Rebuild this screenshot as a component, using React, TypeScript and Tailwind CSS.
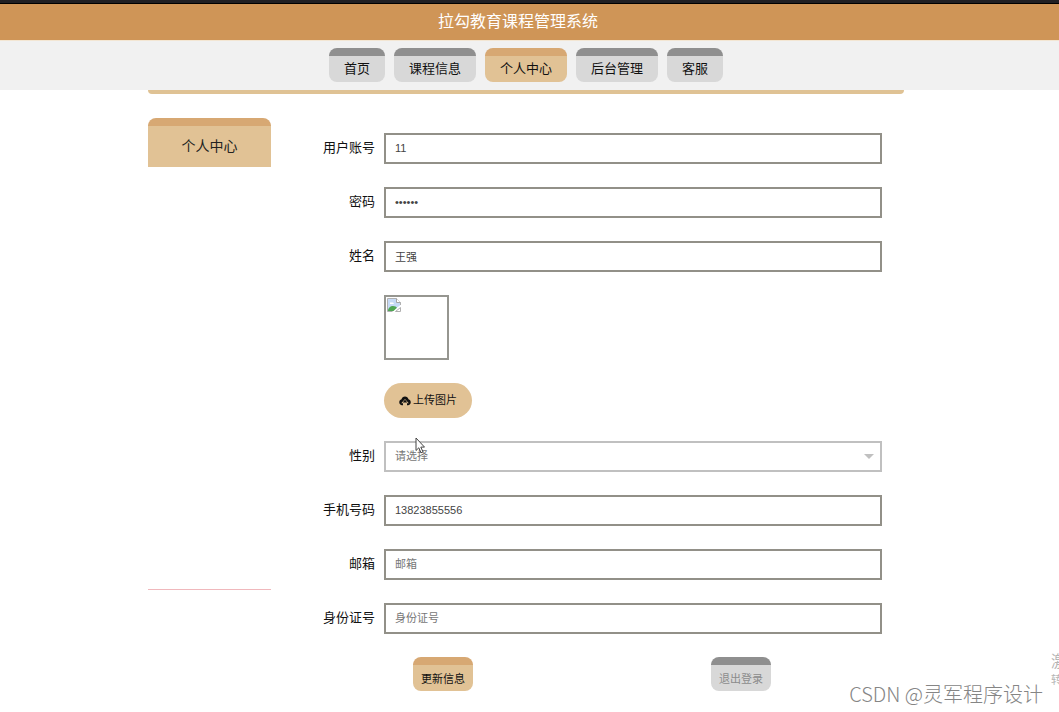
import React, { useState } from 'react';

const navItems = ['首页', '课程信息', '个人中心', '后台管理', '客服'];

const inputClass = "h-[31px] w-full border-2 border-[#929088] bg-white px-[9px] pb-0.5 text-[11px] text-[#444] placeholder:text-[#777] focus:outline-none";
const labelClass = "w-[104px] shrink-0 pb-0.5 text-right text-[13px] leading-5 text-[#111]";
const tabClass = "h-[34px] rounded-lg border-t-8 leading-6";
const activeTab = "border-[#d7a873] bg-[#e1c295]";
const greyTab = "border-[#8f8f8f] bg-[#d8d8d8]";

interface FieldProps {
  id: string;
  label: string;
  value: string;
  onChange: (value: string) => void;
  type?: string;
  placeholder?: string;
}

const Field: React.FC<FieldProps> = ({ id, label, value, onChange, type = 'text', placeholder }) => (
  <div className="flex items-center gap-[9px]">
    <label htmlFor={id} className={labelClass}>{label}</label>
    <input id={id} type={type} className={inputClass} placeholder={placeholder} value={value} onChange={e => onChange(e.target.value)} />
  </div>
);

const BrokenImage = () => (
  <svg width="14" height="14" viewBox="0 0 14 14" role="img" aria-label="头像">
    <path d="M.5.5h9l4 4V7L5 13.500H.5z" fill="#c6daf6" />
    <path d="M3 5.500c0-1 1-1.500 1.800-.8 1-.5 2 .1 2 1.200H3z" fill="#fff" />
    <path d="M1 13c0-3 2.500-5.200 5-5 2 .1 3.500 1 4 1.700L6.500 13z" fill="#4fa653" />
    <path d="M.5 13.500V.5h9l4 4V7M.5 13.500h5" fill="none" stroke="#b0b0b0" />
    <path d="M9.500.5v4h4" fill="#fff" stroke="#a5a5a5" />
    <path d="M13.500 9.500v4h-5z" fill="#fff" stroke="#b0b0b0" />
  </svg>
);

const CloudUpload = () => (
  <svg width="12" height="10" viewBox="0 0 24 20" aria-hidden="true">
    <path d="M12 1C8.500 1 5.700 3.300 5 6.700 2.300 7.400.5 9.700.5 12.500c0 3.300 2.500 6 5.500 6h2v-4H4.500L12 6l7.500 8.500H16v4h2c3 0 5.500-2.700 5.500-6 0-2.800-1.800-5.100-4.500-5.800C18.300 3.300 15.500 1 12 1z" fill="#111" />
    <path d="M12 8.500l-5 5.500h3v4.500h4V14h3z" fill="#e1c295" />
    <path d="M12 7l-4.500 6H16.500z" fill="#111" />
  </svg>
);

export default function App() {
  const [active, setActive] = useState('个人中心');
  const [form, setForm] = useState({ account: '11', password: '123456', name: '王强', gender: '', phone: '13823855556', email: '', idCard: '' });

  const update = (key: keyof typeof form) => (value: string) => setForm({ ...form, [key]: value });

  return (
    <div className="relative min-h-screen overflow-hidden bg-white font-['Liberation_Sans','Noto_Sans_CJK_SC',sans-serif] text-[#111]">
      <div className="h-1 border-b border-black bg-[#202024]" />
      <header className="flex h-9 items-center justify-center bg-[#cf9557] pr-[23px]">
        <h1 className="text-base leading-5 text-white">拉勾教育课程管理系统</h1>
      </header>

      <nav className="flex h-[50px] justify-center gap-[9px] border-t border-[#f3e6d3] bg-[#f1f1f1] pt-[7px] pr-[7px]">
        {navItems.map(item => (
          <button
            key={item}
            onClick={() => setActive(item)}
            className={`${tabClass} px-[15px] text-[13px] ${active === item ? activeTab : greyTab}`}
          >
            {item}
          </button>
        ))}
      </nav>

      <div className="pr-[7px]">
        <div className="mx-auto max-w-[756px]">
          <div className="h-1 rounded-b-lg bg-[#dfc294]" />

          <main className="mt-6 flex items-start">
            <aside className="h-[472px] w-[123px] shrink-0 border-b border-[#f0b8bc]">
              <a href="#profile" className="block h-[49px] rounded-t-lg border-t-8 border-[#d7a873] bg-[#e1c295] text-center text-sm leading-10 text-[#222]">个人中心</a>
            </aside>

            <form className="flex-1 pt-[15px]" onSubmit={e => e.preventDefault()}>
              <div className="flex flex-col gap-[23px] pr-[22px]">
                <Field id="account" label="用户账号" value={form.account} onChange={update('account')} />
                <Field id="password" label="密码" type="password" value={form.password} onChange={update('password')} />
                <Field id="name" label="姓名" value={form.name} onChange={update('name')} />

                <div className="ml-[113px] size-[65px] border-2 border-[#969690] p-px">
                  <BrokenImage />
                </div>

                <button type="button" className="ml-[113px] flex h-[35px] w-[88px] items-center justify-center gap-0.5 rounded-full bg-[#e1c295] text-[11px]">
                  <CloudUpload />
                  上传图片
                </button>

                <div className="flex items-center gap-[9px]">
                  <label htmlFor="gender" className={labelClass}>性别</label>
                  <div className="relative flex-1">
                    <select
                      id="gender"
                      className="block h-[31px] w-full appearance-none border-2 border-[#c0c0c0] bg-white px-[9px] text-[11px] text-[#777] focus:outline-none"
                      value={form.gender}
                      onChange={e => update('gender')(e.target.value)}
                    >
                      <option value="">请选择</option>
                      <option value="男">男</option>
                      <option value="女">女</option>
                    </select>
                    <svg className="pointer-events-none absolute top-[13px] right-2" width="10" height="5" viewBox="0 0 10 5" aria-hidden="true">
                      <path d="M0 0h10L5 5z" fill="#c0c0c0" />
                    </svg>
                  </div>
                </div>

                <Field id="phone" label="手机号码" value={form.phone} onChange={update('phone')} />
                <Field id="email" label="邮箱" placeholder="邮箱" value={form.email} onChange={update('email')} />
                <Field id="idCard" label="身份证号" placeholder="身份证号" value={form.idCard} onChange={update('idCard')} />
              </div>

              <div className="mt-[23px] grid grid-cols-2 justify-items-center pr-[14px] pl-[23px]">
                <button type="submit" className={`${tabClass} ${activeTab} w-[60px] pt-0.5 text-[11px]`}>更新信息</button>
                <button type="button" className={`${tabClass} ${greyTab} w-[60px] pt-0.5 text-[11px] text-[#8c8c8c]`}>退出登录</button>
              </div>
            </form>
          </main>
        </div>
      </div>

      {/* mouse pointer */}
      <svg className="pointer-events-none absolute top-[437px] left-[415px]" width="10" height="17" viewBox="0 0 10 17" aria-hidden="true">
        <path d="M1 1v12.500l2.800-2.700 2.200 5 2-.9-2.200-4.800h3.700z" fill="#fff" stroke="#444" />
      </svg>

      {/* activation notice running off the right edge */}
      <div className="pointer-events-none absolute top-[652px] -right-2 text-[#b5b5b5]">
        <p className="text-base leading-5">激</p>
        <p className="text-[11px] leading-4">转</p>
      </div>

      <p className="pointer-events-none absolute right-4 bottom-1.5 font-['Noto_Sans_CJK_SC',sans-serif] text-xl leading-6 font-light whitespace-nowrap text-[#858585]">CSDN @灵军程序设计</p>
    </div>
  );
}
